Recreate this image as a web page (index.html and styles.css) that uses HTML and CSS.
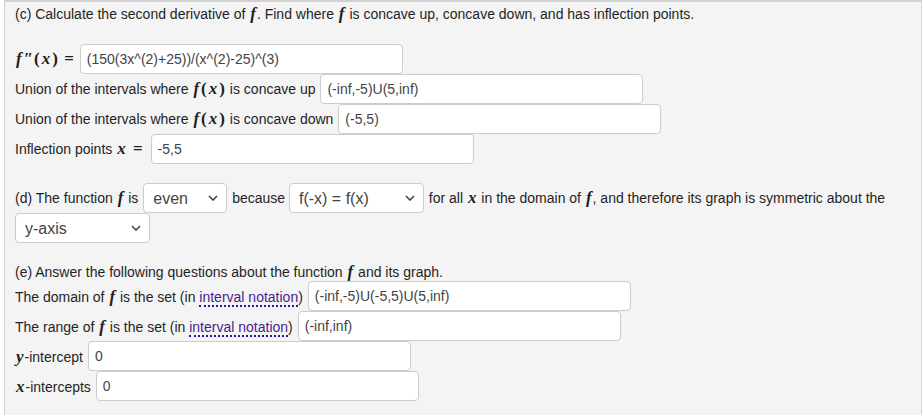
FILE: index.html
```html
<!DOCTYPE html>
<html>
<head>
<meta charset="utf-8">
<link rel="stylesheet" href="styles.css">
</head>
<body>
<div class="panel">
  <p class="title">(c) Calculate the second derivative of <i class="m">f</i>. Find where <i class="m">f</i> is concave up, concave down, and has inflection points.</p>

  <div class="rows">
    <div class="row">
      <span class="label"><span class="mx"><i>f</i>″(<i>x</i>) =</span></span>
      <input class="ans" type="text" value="(150(3x^(2)+25))/(x^(2)-25)^(3)">
    </div>
    <div class="row">
      <span class="label">Union of the intervals where <span class="mx"><i>f</i>(<i>x</i>)</span> is concave up</span>
      <input class="ans" type="text" value="(-inf,-5)U(5,inf)">
    </div>
    <div class="row">
      <span class="label">Union of the intervals where <span class="mx"><i>f</i>(<i>x</i>)</span> is concave down</span>
      <input class="ans" type="text" value="(-5,5)">
    </div>
    <div class="row">
      <span class="label label-wide">Inflection points <span class="mx"><i>x</i> =</span></span>
      <input class="ans" type="text" value="-5,5">
    </div>
  </div>

  <p class="part-d">(d) The function <i class="m">f</i> is <select class="sel sel-even"><option>even</option></select> because <select class="sel sel-wide"><option>f(-x) = f(x)</option></select> for all <i class="m">x</i> in the domain of <i class="m">f</i>, and therefore its graph is symmetric about the <select class="sel sel-wide"><option>y-axis</option></select></p>

  <p class="part-e">(e) Answer the following questions about the function <i class="m">f</i> and its graph.</p>

  <div class="rows">
    <div class="row">
      <span class="label">The domain of <i class="m">f</i> is the set (in <a class="help" href="#">interval notation</a>)</span>
      <input class="ans" type="text" value="(-inf,-5)U(-5,5)U(5,inf)">
    </div>
    <div class="row">
      <span class="label">The range of <i class="m">f</i> is the set (in <a class="help" href="#">interval notation</a>)</span>
      <input class="ans" type="text" value="(-inf,inf)">
    </div>
    <div class="row">
      <span class="label"><i class="m">y</i>-intercept</span>
      <input class="ans" type="text" value="0">
    </div>
    <div class="row">
      <span class="label"><i class="m">x</i>-intercepts</span>
      <input class="ans" type="text" value="0">
    </div>
  </div>
</div>
</body>
</html>
```

FILE: styles.css
```css
html, body {
  margin: 0;
  padding: 0;
  background: #ffffff;
}

body {
  font-family: "Liberation Sans", Arial, sans-serif;
  font-size: 14px;
  color: #1f1f1f;
}

.panel {
  margin-left: 4px;
  min-height: 430px;
  background: #f4f4f4;
  border-left: 1px solid #cfcfcf;
  border-right: 1px solid #d6d6d6;
  border-top: 2px solid #d2d2d2;
  padding: 3px 10px 0 10px;
  box-sizing: border-box;
}

p {
  margin: 0;
}

.title {
  line-height: 18px;
  margin-bottom: 21px;
}

.m, .mx i {
  font-family: "Liberation Serif", "Times New Roman", serif;
  font-style: italic;
  font-weight: bold;
  font-size: 17px;
  line-height: 1;
  margin: 0 1px;
}

.mx {
  font-family: "Liberation Serif", "Times New Roman", serif;
  font-size: 17px;
  font-weight: bold;
  letter-spacing: 1px;
}

.rows {
  display: flex;
  flex-direction: column;
}

.row {
  display: flex;
  align-items: center;
  gap: 5px;
  height: 30px;
}

.label-wide {
  padding-right: 2px;
}

.ans {
  box-sizing: border-box;
  width: 323px;
  height: 30px;
  margin: 0;
  padding: 0 6px;
  border: 1px solid #cccccc;
  border-radius: 4px;
  background: #ffffff;
  font-family: "Liberation Sans", Arial, sans-serif;
  font-size: 14px;
  color: #444444;
}

.part-d {
  margin-top: 19px;
  line-height: 30px;
}

.sel {
  -webkit-appearance: none;
  appearance: none;
  box-sizing: border-box;
  height: 30px;
  vertical-align: top;
  margin: 0 1px;
  padding: 0 20px 0 9px;
  border: 1px solid #cccccc;
  border-radius: 4px;
  background-color: #ffffff;
  background-image: url("data:image/svg+xml;utf8,<svg xmlns='http://www.w3.org/2000/svg' width='10' height='6' viewBox='0 0 10 6'><path d='M1 1 L5 5 L9 1' fill='none' stroke='%23444' stroke-width='1.6'/></svg>");
  background-repeat: no-repeat;
  background-position: right 8px center;
  font-family: "Liberation Sans", Arial, sans-serif;
  font-size: 16px;
  color: #444444;
}

.sel-even {
  width: 84px;
}

.sel-wide {
  width: 135px;
  margin-left: 0;
}

.part-e {
  margin-top: 20px;
  line-height: 18px;
  margin-bottom: 0;
}

.help {
  color: #4b1d8f;
  text-decoration: none;
  border-bottom: 2px dotted #1a1aa6;
}
```
